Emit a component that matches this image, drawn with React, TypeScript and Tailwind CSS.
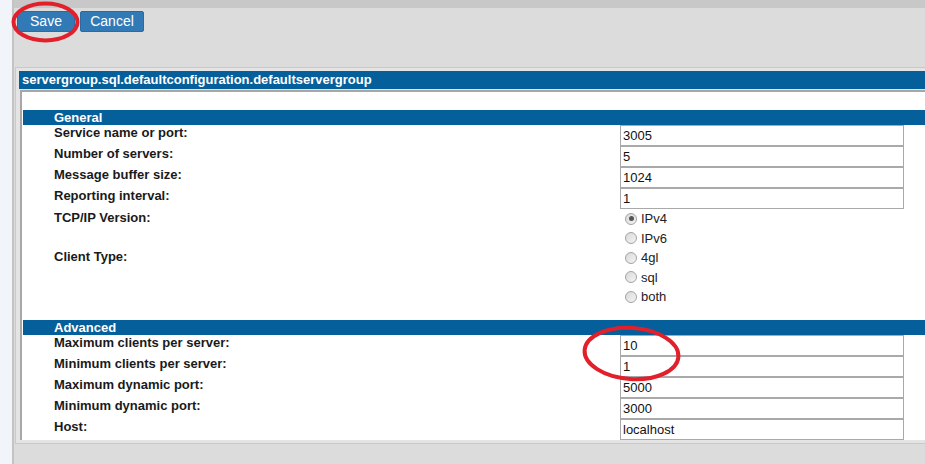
import React from "react"

type Field = { label: string; value: string }

const general: Field[] = [
  { label: "Service name or port:", value: "3005" },
  { label: "Number of servers:", value: "5" },
  { label: "Message buffer size:", value: "1024" },
  { label: "Reporting interval:", value: "1" },
]

const advanced: Field[] = [
  { label: "Maximum clients per server:", value: "10" },
  { label: "Minimum clients per server:", value: "1" },
  { label: "Maximum dynamic port:", value: "5000" },
  { label: "Minimum dynamic port:", value: "3000" },
  { label: "Host:", value: "localhost" },
]

function SectionHeader({ title }: { title: string }) {
  return (
    <div className="h-[15px] bg-[#045f9b] pl-[31px] text-[13px] font-bold leading-[15px] text-white">
      {title}
    </div>
  )
}

function InputRow({ label, value }: Field) {
  return (
    <div className="flex h-[21px] items-start">
      <div className="w-[597px] pl-[31px] text-[13px] font-bold leading-[15px] text-[#1a1a1a]">
        {label}
      </div>
      <div className="h-[21px] w-[284px] border border-[#a9a9a9] bg-white pl-[2px] text-[13px] leading-[19px] text-[#111]">
        {value}
      </div>
    </div>
  )
}

function Radio({ label, checked }: { label: string; checked?: boolean }) {
  return (
    <div className="flex h-[19.5px] items-center pl-[5px]">
      <span className="flex h-[12px] w-[12px] items-center justify-center rounded-full border border-[#a3a3a3] bg-gradient-to-br from-[#d9d9d9] to-[#f4f4f4]">
        {checked && <span className="h-[5px] w-[5px] rounded-full bg-[#555]" />}
      </span>
      <span className="ml-[4px] text-[13px] leading-[15px] text-[#222]">{label}</span>
    </div>
  )
}

function RadioRow({ label, options, checked }: { label: string; options: string[]; checked?: string }) {
  return (
    <div className="flex items-start">
      <div className="w-[597px] pl-[31px] pt-[1px] text-[13px] font-bold leading-[15px] text-[#1a1a1a]">
        {label}
      </div>
      <div className="flex flex-col">
        {options.map((o) => (
          <Radio key={o} label={o} checked={o === checked} />
        ))}
      </div>
    </div>
  )
}

export default function App() {
  return (
    <div className="relative flex h-[464px] w-[925px] overflow-hidden bg-[#dcdcdc] font-['Liberation_Sans',Arial,sans-serif]">
      {/* left strip */}
      <div className="w-[14px] shrink-0 border-r-2 border-[#c3c3c3] bg-[#f1f4f8]" />

      <div className="flex min-w-0 flex-1 flex-col">
        <div className="h-[8px] bg-[#c8c8c8]" />

        {/* toolbar */}
        <div className="flex gap-[5px] pl-[3px] pt-[3px]">
          <button className="h-[21px] w-[58px] rounded-[2px] border border-[#2c6aa0] bg-[#327ab6] text-[14px] leading-[19px] text-white">
            Save
          </button>
          <button className="h-[21px] w-[64px] rounded-[2px] border border-[#2c6aa0] bg-[#327ab6] text-[14px] leading-[19px] text-white">
            Cancel
          </button>
        </div>

        {/* config frame */}
        <div className="ml-[1px] mt-[35px] w-[940px] border border-[#c9c9c9] bg-[#e4e4e4] p-[3px]">
          <div className="h-[18px] bg-[#045f9b] pl-[3px] text-[13px] font-bold leading-[18px] text-white">
            servergroup.sql.defaultconfiguration.defaultservergroup
          </div>
          <div className="ml-[1px] mt-[1px] border-l-2 border-t-2 border-[#a7a7a7] bg-white pl-[1px] pt-[18px]">
            <SectionHeader title="General" />
            {general.map((f) => (
              <InputRow key={f.label} {...f} />
            ))}
            <RadioRow label="TCP/IP Version:" options={["IPv4", "IPv6"]} checked="IPv4" />
            <RadioRow label="Client Type:" options={["4gl", "sql", "both"]} />
            <div className="h-[13px]" />
            <SectionHeader title="Advanced" />
            {advanced.map((f) => (
              <InputRow key={f.label} {...f} />
            ))}
          </div>
        </div>
      </div>

      {/* red annotation marks */}
      <svg className="pointer-events-none absolute left-0 top-0" width="925" height="464">
        <ellipse cx="45.5" cy="22" rx="32" ry="18.5" fill="none" stroke="#e2202b" strokeWidth="4" />
        <ellipse
          cx="631.5"
          cy="353.5"
          rx="47"
          ry="25.5"
          fill="none"
          stroke="#e2202b"
          strokeWidth="4"
          transform="rotate(4 631.5 353.5)"
        />
      </svg>
    </div>
  )
}
